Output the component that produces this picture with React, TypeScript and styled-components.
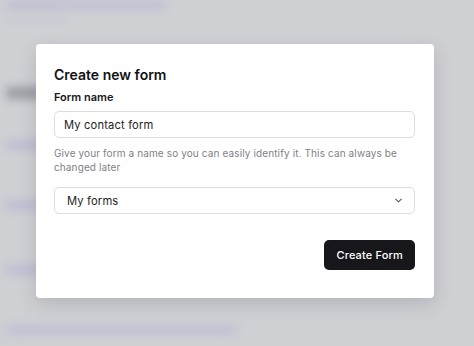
import styled, { createGlobalStyle } from 'styled-components';

const GlobalStyle = createGlobalStyle`
  html, body { margin: 0; padding: 0; }
  body {
    width: 474px;
    height: 346px;
    overflow: hidden;
    background: #cfd0d4;
    font-family: Inter, "Noto Sans", sans-serif;
    -webkit-font-smoothing: antialiased;
  }
`;

const Page = styled.div`
  position: relative;
  width: 474px;
  height: 346px;
  overflow: hidden;
  background: #cfd0d4;
`;

// blurred page behind the modal
const Backdrop = styled.div`
  position: absolute;
  inset: 0;
  filter: blur(5px);
  display: flex;
  flex-direction: column;
  padding: 0 0 0 6px;
`;

const Ghost = styled.div<{ $w: number; $h: number; $c: string; $mt: number }>`
  width: ${(p) => p.$w}px;
  height: ${(p) => p.$h}px;
  margin-top: ${(p) => p.$mt}px;
  background: ${(p) => p.$c};
  border-radius: 3px;
`;

const Modal = styled.div`
  position: absolute;
  left: 36px;
  top: 44px;
  width: 398px;
  height: 254px;
  box-sizing: border-box;
  background: #ffffff;
  border-radius: 4px;
  box-shadow: 0 6px 18px rgba(60, 60, 70, 0.18);
  padding: 22px 19px 0 18px;
  display: flex;
  flex-direction: column;
`;

const Title = styled.h2`
  margin: 0;
  font-size: 14px;
  line-height: 18px;
  font-weight: 600;
  color: #121215;
`;

const Label = styled.label`
  margin-top: 5px;
  font-size: 11px;
  line-height: 16px;
  font-weight: 600;
  color: #17171a;
`;

const Field = styled.div<{ $pl?: number; $pr?: number; $mt?: number }>`
  margin-top: ${(p) => p.$mt ?? 6}px;
  height: 27px;
  box-sizing: border-box;
  border: 1px solid #dcdde0;
  border-radius: 5px;
  display: flex;
  align-items: center;
  justify-content: space-between;
  padding: 0 ${(p) => p.$pr ?? 10}px 0 ${(p) => p.$pl ?? 9}px;
  font-size: 11.2px;
  color: #1d1d21;
  letter-spacing: 0.15px;
`;

const Help = styled.p`
  margin: 8px 0 0;
  font-size: 10px;
  line-height: 14px;
  color: #7f8087;
  letter-spacing: 0.12px;
`;

const Actions = styled.div`
  margin-top: 26px;
  display: flex;
  justify-content: flex-end;
`;

const Button = styled.button`
  height: 30px;
  padding: 0 12px;
  border: none;
  border-radius: 5px;
  background: #17171b;
  color: #ffffff;
  font-family: Inter, "Noto Sans", sans-serif;
  font-size: 11px;
  font-weight: 500;
  letter-spacing: 0.15px;
`;

const Chevron = () => (
  <svg width="11" height="11" viewBox="0 0 24 24" fill="none" stroke="#55565c" strokeWidth={2.2} strokeLinecap="round" strokeLinejoin="round">
    <path d="m6 9 6 6 6-6" />
  </svg>
);

export default function App() {
  return (
    <>
      <GlobalStyle />
      <Page>
        <Backdrop>
          <Ghost $w={160} $h={6} $c="#b8b8d2" $mt={2} />
          <Ghost $w={60} $h={5} $c="#c6c7d6" $mt={8} />
          <Ghost $w={60} $h={12} $c="#9a9ba2" $mt={66} />
          <Ghost $w={50} $h={8} $c="#b9b9d2" $mt={42} />
          <Ghost $w={50} $h={8} $c="#b9b9d2" $mt={52} />
          <Ghost $w={50} $h={8} $c="#b9b9d2" $mt={57} />
          <Ghost $w={230} $h={8} $c="#bdbdd6" $mt={52} />
        </Backdrop>
        <Modal>
          <Title>Create new form</Title>
          <Label>Form name</Label>
          <Field>My contact form</Field>
          <Help>Give your form a name so you can easily identify it. This can always be changed later</Help>
          <Field $pl={12} $pr={10} $mt={13}>
            <span>My forms</span>
            <Chevron />
          </Field>
          <Actions>
            <Button>Create Form</Button>
          </Actions>
        </Modal>
      </Page>
    </>
  );
}
